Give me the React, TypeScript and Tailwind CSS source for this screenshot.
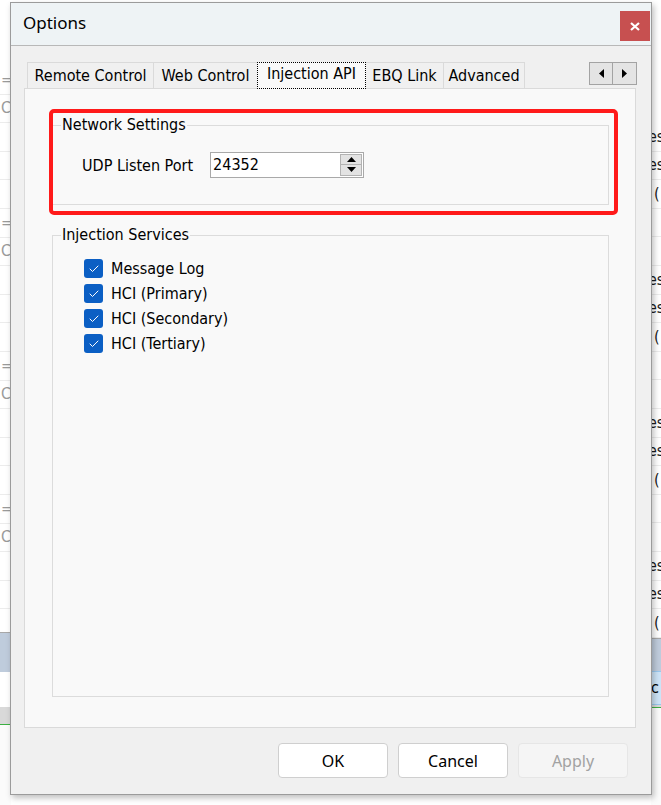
import { Check } from "lucide-react";

const tahoma = "font-['DejaVu_Sans_Condensed','Liberation_Sans',sans-serif]";
const segoe = "font-['Noto_Sans','Open_Sans',sans-serif]";

const tabs = [
  { label: "Remote Control", width: "w-[127px]", selected: false },
  { label: "Web Control", width: "w-[105px]", selected: false },
  { label: "Injection API", width: "w-[109px]", selected: true },
  { label: "EBQ Link", width: "w-[79px]", selected: false },
  { label: "Advanced", width: "w-[82px]", selected: false },
];

const services = ["Message Log", "HCI (Primary)", "HCI (Secondary)", "HCI (Tertiary)"];

const leftRows = ["=", "C", "", "", ""];
const rightRows = ["es", "es", "s (", "", ""];

// the app window that sits behind the dialog
const BackgroundColumn = ({
  rows,
  top,
  side,
}: {
  rows: string[];
  top: string;
  side: "left" | "right";
}) => (
  <div className={`flex flex-col h-full overflow-hidden ${side === "left" ? "w-[11px]" : "w-[10px]"}`}>
    <div className={`flex-1 overflow-hidden flex flex-col ${top}`}>
      {[0, 1, 2, 3, 4].map((b) => (
        <div key={b} className="flex flex-col shrink-0">
          {rows.map((r, i) => (
            <div
              key={i}
              className={`h-[28.6px] shrink-0 flex items-center whitespace-nowrap border-b border-[#ececec] text-[16px] ${tahoma} ${
                side === "left"
                  ? "text-[#9a9a9a] pl-[1px]"
                  : i === 2
                    ? "text-[#1a1a1a] -ml-[9px]"
                    : "text-[#1a1a1a] -ml-[3px]"
              }`}
            >
              {r}
            </div>
          ))}
        </div>
      ))}
    </div>
    {side === "left" ? (
      <div className="flex flex-col shrink-0">
        <div className="h-[1px] bg-[#a8a8a8]" />
        <div className="h-[39px] bg-[#bfccdc]" />
        <div className="h-[35px] bg-white" />
        <div className="h-[17px] bg-[#d9d9d9]" />
        <div className="h-[1px] bg-[#3cb043]" />
        <div className="h-[80px] bg-[#fbfbfb]" />
      </div>
    ) : (
      <div className="flex flex-col shrink-0">
        <div className="h-[1px] bg-[#a8a8a8]" />
        <div className="h-[32px] bg-[#bfccdc]" />
        <div className={`h-[34px] bg-[#cde4f7] border-y border-[#99c9ef] flex items-center text-[16px] ${tahoma}`}>
          c
        </div>
        <div className="h-[2px] bg-[#d9d9d9]" />
        <div className="h-[1px] bg-[#3cb043]" />
        <div className="h-[97px] bg-[#fbfbfb]" />
      </div>
    )}
  </div>
);

const Tab = ({ tab }: { tab: (typeof tabs)[0] }) =>
  tab.selected ? (
    <div
      className={`${tab.width} h-[27px] -ml-px -mb-px relative z-10 flex items-start justify-center pt-[2px] leading-[18px] bg-[#f9f9f9] border border-dotted border-black text-[16px] text-black`}
    >
      {tab.label}
    </div>
  ) : (
    <div
      className={`${tab.width} h-[26px] -ml-px first:ml-0 flex items-start justify-center pt-[4px] leading-[18px] bg-[#f0f0f0] border border-b-0 border-[#dadada] text-[16px] text-black`}
    >
      {tab.label}
    </div>
  );

const GroupBox = ({
  title,
  className,
  children,
}: {
  title: string;
  className: string;
  children: React.ReactNode;
}) => (
  <fieldset className={`border border-[#dcdcdc] ${className}`}>
    <legend className="ml-[8px] px-[1px] text-[16px] leading-[18px] text-black">{title}</legend>
    {children}
  </fieldset>
);

const SpinBox = () => (
  <div className="w-[154px] h-[26px] border border-[#a9a9a9] bg-white flex items-center">
    <span className="flex-1 pl-[2px] text-[16px] text-black">24352</span>
    <div className="flex flex-col mr-[1px] gap-0">
      <div className="w-[22px] h-[11px] bg-[#e3e3e3] border border-[#b3b3b3] flex items-center justify-center">
        <svg width="9" height="5" viewBox="0 0 9 5">
          <polygon points="0,5 9,5 4.5,0" fill="#000" />
        </svg>
      </div>
      <div className="w-[22px] h-[11px] bg-[#e3e3e3] border border-[#b3b3b3] border-t-0 flex items-center justify-center">
        <svg width="9" height="5" viewBox="0 0 9 5">
          <polygon points="0,0 9,0 4.5,5" fill="#000" />
        </svg>
      </div>
    </div>
  </div>
);

const Button = ({ label, disabled }: { label: string; disabled?: boolean }) => (
  <button
    className={`w-[110px] h-[35px] rounded-[4px] border text-[16px] ${segoe} ${
      disabled
        ? "bg-[#f5f5f5] border-[#e6e6e6] text-[#a2a2a2]"
        : "bg-white border-[#cfcfcf] text-black"
    }`}
  >
    {label}
  </button>
);

export default function App() {
  return (
    <div className="relative w-[661px] h-[805px] overflow-hidden bg-white flex justify-between">
      <BackgroundColumn rows={leftRows} top="pt-[66px]" side="left" />
      <BackgroundColumn rows={rightRows} top="pt-[123px]" side="right" />

      {/* Options dialog */}
      <div className="absolute left-[10px] top-[2px] w-[642px] h-[793px] flex flex-col bg-[#f0f0f0] border border-[#9b9b9b] shadow-[2px_3px_6px_rgba(0,0,0,0.25)]">
        <div className="h-[43px] shrink-0 flex items-start justify-between bg-[#eef3f5] border-b border-[#b8b8b8]">
          <span className={`ml-[12px] mt-[7px] text-[17px] text-black ${segoe}`}>Options</span>
          <div className="w-[30px] h-[30px] mt-[8px] mr-[1px] bg-[#c75050] flex items-center justify-center">
            <svg width="10" height="9" viewBox="0 0 10 9">
              <path d="M1 1 L9 8 M9 1 L1 8" stroke="#fff" strokeWidth="2.2" />
            </svg>
          </div>
        </div>

        <div className={`flex-1 flex flex-col pt-[15px] pl-[13px] pr-[15px] ${tahoma}`}>
          <div className="flex items-end h-[27px] pl-[3px]">
            {tabs.map((t) => (
              <Tab key={t.label} tab={t} />
            ))}
            <div className="ml-auto self-start mt-[1px] mr-[-1px] flex">
              <div className="w-[24px] h-[23px] bg-[#e4e4e4] border border-[#a3a3a3] flex items-center justify-center">
                <svg width="5" height="9" viewBox="0 0 5 9">
                  <polygon points="5,0 5,9 0,4.5" fill="#000" />
                </svg>
              </div>
              <div className="w-[24px] h-[23px] bg-[#e4e4e4] border border-l-0 border-[#a3a3a3] flex items-center justify-center">
                <svg width="5" height="9" viewBox="0 0 5 9">
                  <polygon points="0,0 0,9 5,4.5" fill="#000" />
                </svg>
              </div>
            </div>
          </div>

          <div className="relative h-[640px] flex flex-col bg-[#f9f9f9] border border-[#dadada] pt-[27px] pl-[27px] pr-[26px] pb-[30px]">
            <GroupBox title="Network Settings" className="h-[89px] shrink-0">
              <div className="flex items-center pt-[17px] pl-[29px] gap-[17px]">
                <span className="text-[16px] text-black pt-[3px]">UDP Listen Port</span>
                <SpinBox />
              </div>
            </GroupBox>

            <GroupBox title="Injection Services" className="flex-1 mt-[21px]">
              <div className="flex flex-col pt-[15px] pl-[31px] gap-[6px]">
                {services.map((s) => (
                  <div key={s} className="flex items-center gap-[8px] h-[19px]">
                    <div className="w-[19px] h-[19px] rounded-[3px] bg-[#0b5fc4] flex items-center justify-center">
                      <Check className="w-[12px] h-[12px] text-white" strokeWidth={2} />
                    </div>
                    <span className="text-[16px] text-black">{s}</span>
                  </div>
                ))}
              </div>
            </GroupBox>

            {/* red annotation around the network group */}
            <div className="absolute left-[24px] top-[20px] w-[569px] h-[106px] border-[4px] border-[#ff1a1a] rounded-[5px]" />
          </div>

          <div className="flex justify-end gap-[10px] mt-[15px] pr-[8px]">
            <Button label="OK" />
            <Button label="Cancel" />
            <Button label="Apply" disabled />
          </div>
        </div>
      </div>
    </div>
  );
}
